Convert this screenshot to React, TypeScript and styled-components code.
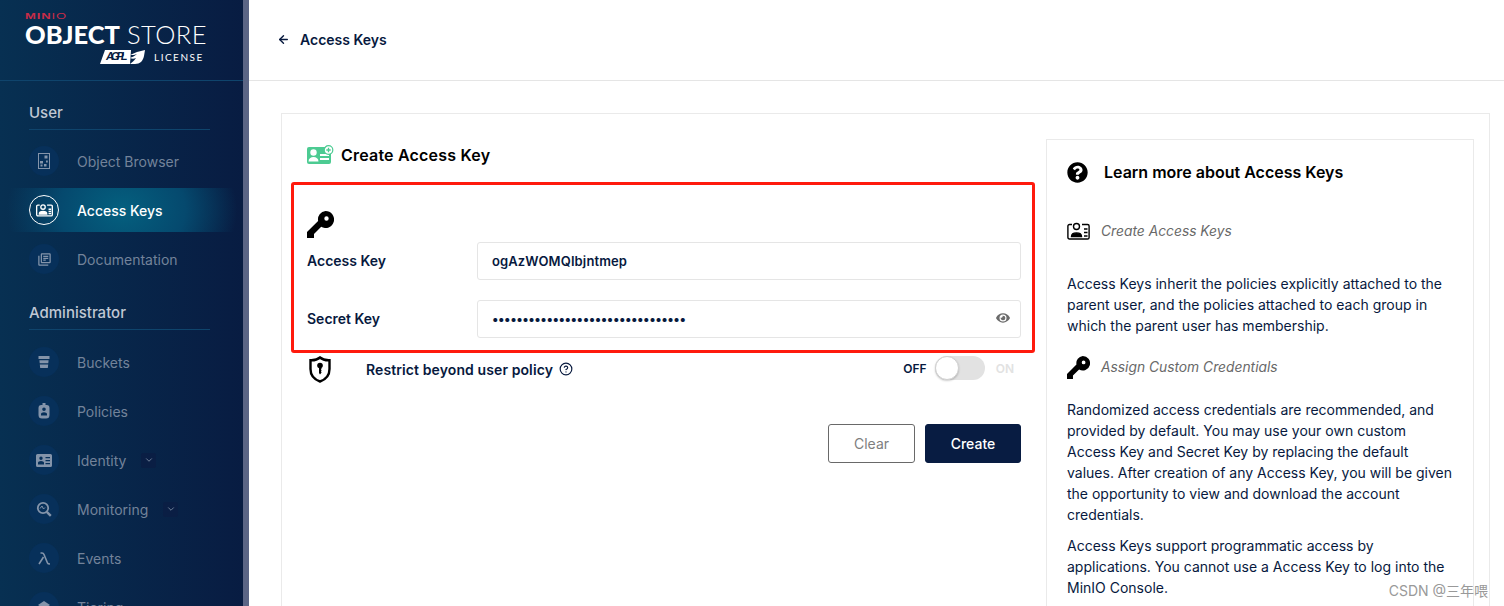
import styled, { createGlobalStyle } from 'styled-components'
import { FaQuestionCircle, FaEye } from 'react-icons/fa'
import { FiArrowLeft, FiChevronDown, FiHelpCircle } from 'react-icons/fi'
import { MdOutlineLibraryBooks } from 'react-icons/md'

const GlobalStyle = createGlobalStyle`
  html, body {
    margin: 0;
    padding: 0;
    height: 100%;
    overflow: hidden;
    background: #fff;
    font-family: Inter, "Liberation Sans", sans-serif;
  }
  * { box-sizing: border-box; }
`

const Page = styled.div`
  display: flex;
  width: 1504px;
  height: 606px;
  overflow: hidden;
  position: relative;
`

const Sidebar = styled.aside`
  width: 249px;
  height: 606px;
  flex-shrink: 0;
  overflow: hidden;
  background: linear-gradient(90deg, #073052 0%, #081c42 100%);
  border-right: 6px solid #5b6585;
`

const LogoBar = styled.div`
  height: 81px;
  border-bottom: 1px solid #0f446c;
  padding: 12px 0 0 25px;
`

const LogoMin = styled.div`
  font-family: "Liberation Sans", sans-serif;
  font-size: 9px;
  line-height: 9px;
  font-weight: 700;
  letter-spacing: 0.6px;
  color: #c72c48;
  transform: scaleX(1.45);
  transform-origin: left center;
  span { font-weight: 400; }
`

const LogoTitle = styled.div`
  font-family: Lato, sans-serif;
  font-size: 25.5px;
  line-height: 26px;
  font-weight: 900;
  color: #fff;
  white-space: nowrap;
  span { font-weight: 300; margin-left: 7px; letter-spacing: 0.4px; }
`

const LogoLicense = styled.div`
  display: flex;
  align-items: center;
  gap: 8px;
  margin: 2px 0 0 75px;
  font-family: Lato, sans-serif;
  font-size: 10px;
  letter-spacing: 1.5px;
  color: #fff;
  height: 16px;
`

const Section = styled.div<{ $top: number }>`
  margin: 0 33px 0 29px;
  padding-top: ${(p) => p.$top}px;
`

const SectionTitle = styled.div`
  height: 30px;
  font-size: 15px;
  line-height: 25px;
  font-weight: 500;
  color: #c0c8d4;
  border-bottom: 1px solid #0f446c;
`

const NavList = styled.div<{ $top: number }>`
  padding-top: ${(p) => p.$top}px;
`

const NavItem = styled.div<{ $active?: boolean }>`
  display: flex;
  align-items: center;
  height: 44px;
  margin-bottom: 5px;
  padding-left: 29px;
  font-size: 14px;
  color: ${(p) => (p.$active ? '#fff' : '#73839a')};
  font-weight: ${(p) => (p.$active ? 500 : 400)};
  background: ${(p) =>
    p.$active
      ? 'radial-gradient(ellipse 115px 90px at 122px 50%, #04607f 0%, #05496e 55%, rgba(5, 50, 85, 0) 100%)'
      : 'none'};
`

const NavCircle = styled.span<{ $active?: boolean }>`
  width: 30px;
  height: 30px;
  border-radius: 50%;
  flex-shrink: 0;
  display: flex;
  align-items: center;
  justify-content: center;
  margin-right: 18px;
  color: ${(p) => (p.$active ? '#fff' : '#8494aa')};
  background: ${(p) => (p.$active ? 'transparent' : '#07305a')};
  border: ${(p) => (p.$active ? '1px solid #fff' : 'none')};
`

const Chevron = styled.span`
  width: 15px;
  height: 15px;
  margin-left: 15px;
  border-radius: 2px;
  background: #0a1e44;
  display: flex;
  align-items: center;
  justify-content: center;
  color: #8494aa;
`

const Main = styled.main`
  flex: 1;
  min-width: 0;
  height: 606px;
  overflow: hidden;
`

const TopBar = styled.header`
  height: 81px;
  border-bottom: 1px solid #e5e5e5;
  display: flex;
  align-items: center;
  padding: 0 0 1px 28px;
  gap: 10px;
  font-size: 14px;
  font-weight: 600;
  color: #07193e;
`

const Card = styled.section`
  display: flex;
  margin: 32px 14px 0 32px;
  height: 560px;
  border: 1px solid #eaeaea;
  padding: 25px 13px 0 24px;
  gap: 25px;
`

const FormColumn = styled.div`
  width: 715px;
  flex-shrink: 0;
  padding-left: 1px;
`

const FormTitle = styled.h1`
  display: flex;
  align-items: center;
  gap: 7px;
  margin: 0;
  height: 32px;
  font-size: 16px;
  letter-spacing: 0.2px;
  font-weight: 600;
  color: #000;
`

const KeyRow = styled.div`
  height: 27px;
  margin-top: 40px;
  margin-bottom: -16px;
`

const Field = styled.div`
  display: flex;
  align-items: center;
  height: 38px;
  margin-top: 20px;
`

const FieldLabel = styled.label`
  width: 170px;
  padding-bottom: 2px;
  font-size: 14px;
  font-weight: 600;
  color: #07193e;
`

const FieldInput = styled.div`
  flex: 1;
  height: 38px;
  border: 1px solid #e5e5e5;
  border-radius: 3px;
  display: flex;
  align-items: center;
  justify-content: space-between;
  padding: 0 10px 0 14px;
  font-size: 13px;
  font-weight: 600;
  letter-spacing: 0.12px;
  color: #07193e;
  white-space: nowrap;
`

const SecretDots = styled.span`
  letter-spacing: -0.5px;
`

const EyeIcon = styled(FaEye)`
  color: #6b6b6b;
  margin-bottom: 2px;
`

const RestrictRow = styled.div`
  display: flex;
  align-items: center;
  height: 36px;
  margin-top: 13px;
  padding-left: 1px;
`

const RestrictLabel = styled.span`
  display: flex;
  align-items: center;
  gap: 6px;
  margin-left: 34px;
  font-size: 14px;
  letter-spacing: 0.1px;
  font-weight: 600;
  color: #07193e;
`

const SwitchGroup = styled.div`
  margin-left: auto;
  margin-right: 7px;
  display: flex;
  align-items: center;
  gap: 8px;
  font-size: 12px;
  font-weight: 600;
  margin-top: -2px;
`

const SwitchTrack = styled.span`
  display: block;
  position: relative;
  width: 50px;
  height: 24px;
  border-radius: 12px;
  background: #e2e2e2;
`

const SwitchKnob = styled.span`
  position: absolute;
  left: 0;
  top: 0;
  width: 24px;
  height: 24px;
  border-radius: 50%;
  background: #fff;
  border: 1px solid #d0d0d0;
  box-shadow: 0 1px 2px rgba(0, 0, 0, 0.2);
`

const OnLabel = styled.span`
  color: #e2e2e2;
  margin-left: 3px;
`

const OffLabel = styled.span`
  color: #07193e;
`

const Actions = styled.div`
  display: flex;
  justify-content: flex-end;
  gap: 10px;
  margin-top: 37px;
`

const Button = styled.button<{ $primary?: boolean }>`
  height: 39px;
  padding: 0;
  width: ${(p) => (p.$primary ? 96 : 87)}px;
  border-radius: 3px;
  font-family: inherit;
  font-size: 14px;
  border: 1px solid ${(p) => (p.$primary ? '#081c42' : '#696969')};
  background: ${(p) => (p.$primary ? '#081c42' : '#fff')};
  color: ${(p) => (p.$primary ? '#fff' : '#7e7e7e')};
  font-weight: ${(p) => (p.$primary ? 500 : 400)};
`

const HelpBox = styled.aside`
  width: 428px;
  flex-shrink: 0;
  border: 1px solid #eaeaea;
  padding: 20px 20px 0 20px;
  height: 540px;
  font-size: 14px;
  line-height: 21px;
  color: #07193e;
`

const HelpTitle = styled.h2`
  display: flex;
  align-items: center;
  gap: 16px;
  margin: 0 0 35px;
  font-size: 16px;
  line-height: 24px;
  font-weight: 600;
  color: #000;
`

const HelpSub = styled.div<{ $top?: number }>`
  display: flex;
  align-items: center;
  gap: 11px;
  height: 24px;
  margin-top: ${(p) => p.$top ?? 0}px;
  font-size: 13.8px;
  font-style: italic;
  color: #696969;
`

const HelpText = styled.p<{ $top: number }>`
  margin: ${(p) => p.$top}px 0 0;
  color: #07193e;
`

const RedFrame = styled.div`
  position: absolute;
  left: 291px;
  top: 182px;
  width: 744px;
  height: 171px;
  border: 3px solid #ff1a0d;
  border-radius: 3px;
  pointer-events: none;
`

const Watermark = styled.div`
  position: absolute;
  right: 16px;
  bottom: 6px;
  font-size: 14px;
  color: #999;
  font-family: Inter, "Noto Sans CJK SC", sans-serif;
`

const KeyIcon = ({ size }: { size: number }) => (
  <svg width={size} height={size} viewBox="0 0 27 27" fill="#000">
    <path
      fillRule="evenodd"
      d="M18.5 0a8.5 8.5 0 1 1-4.3 15.8L7 23v4H0v-6l11.1-11.1A8.5 8.5 0 0 1 18.5 0zm1 5.300a2.200 2.200 0 1 0 0 4.400 2.200 2.200 0 0 0 0-4.400z"
    />
  </svg>
)

const ObjectIcon = () => (
  <svg width="14" height="16" viewBox="0 0 14 16" fill="currentColor">
    <path fillRule="evenodd" d="M1 0h12v16H1zM2 1v14h10V1z" />
    <rect x="7.500" y="2.500" width="3" height="3" />
    <rect x="3" y="8" width="3" height="2.500" />
    <rect x="7" y="11" width="2.500" height="2.500" />
    <rect x="9" y="7.500" width="1.800" height="2" />
    <rect x="3.500" y="11.500" width="2" height="2" />
  </svg>
)

const BucketIcon = () => (
  <svg width="14" height="14" viewBox="0 0 14 14" fill="currentColor">
    <path d="M1.500 1h11v3h-11zM2.400 5.200h9.200l-.3 3H2.700zM2.800 9.400h8.400l-.4 3.600H3.200z" />
  </svg>
)

const PolicyIcon = () => (
  <svg width="12" height="16" viewBox="0 0 12 16" fill="currentColor">
    <path
      fillRule="evenodd"
      d="M4.500 0h3v2h1.200A3 3 0 0 1 11.500 5v7a3.500 3.500 0 0 1-3.500 3.500H4A3.500 3.500 0 0 1 .5 12V5a3 3 0 0 1 2.800-3h1.200zM6 4.500a1.800 1.800 0 1 0 0 3.600 1.800 1.800 0 0 0 0-3.600zM3 12.500h6V11c0-1-1.500-1.800-3-1.800S3 10 3 11z"
    />
  </svg>
)

const IdentityIcon = () => (
  <svg width="16" height="13" viewBox="0 0 16 13" fill="currentColor">
    <path
      fillRule="evenodd"
      d="M1.500 0h13A1.500 1.500 0 0 1 16 1.500v10a1.500 1.500 0 0 1-1.500 1.500h-13A1.500 1.500 0 0 1 0 11.500v-10A1.500 1.500 0 0 1 1.500 0zM5 2.500a1.700 1.700 0 1 0 0 3.400 1.700 1.700 0 0 0 0-3.400zM2 10.500h6V8.800C8 7.800 6.500 7 5 7S2 7.800 2 8.800zM9.500 3v1.300H14V3zm0 3v1.300H14V6zm0 3v1.300H14V9z"
    />
  </svg>
)

const AccessIcon = () => (
  <svg width="17" height="14" viewBox="0 0 23 18" fill="none" stroke="#fff" strokeWidth="1.800">
    <path d="M5 2.500H2.500a1.600 1.600 0 0 0-1.600 1.600v11.200A1.600 1.600 0 0 0 2.500 17h18a1.600 1.600 0 0 0 1.600-1.600V4.100a1.600 1.600 0 0 0-1.600-1.600H15" />
    <circle cx="9.500" cy="5" r="3" />
    <path d="M4.500 14.500c0-2.700 2-3.600 5-3.600s5 .9 5 3.600z" fill="#fff" />
    <path d="M17 8h3.500M17 11h3.500M17 14h3.500" />
  </svg>
)

const MonitorIcon = () => (
  <svg width="16" height="16" viewBox="0 0 16 16" fill="none" stroke="currentColor" strokeWidth="1.800">
    <circle cx="7" cy="7" r="5.200" />
    <path d="m10.800 10.800 4 4" strokeWidth="2.400" />
    <path d="M4 7.500 6 5l1.500 3L9 6.500" strokeWidth="1" />
  </svg>
)

const LambdaIcon = () => (
  <svg width="15" height="15" viewBox="0 0 15 15" fill="none" stroke="currentColor" strokeWidth="1.600">
    <path d="M2 13 6.500 6M3.500 2h1.500c1 0 1.600.5 2 1.500L10.500 12c.3.8.8 1 2.500 1" />
  </svg>
)

const TieringIcon = () => (
  <svg width="14" height="14" viewBox="0 0 14 14" fill="currentColor">
    <path d="M7 1 13 5 7 9 1 5z" />
  </svg>
)

const CreateKeyIcon = () => (
  <svg width="27" height="20" viewBox="0 0 27 20">
    <rect x="0" y="2" width="24" height="17" rx="2" fill="#4ccb92" />
    <circle cx="6.500" cy="7.500" r="3.200" fill="#fff" />
    <path d="M1.500 16.500c0-3 2.200-4.500 5-4.500s5 1.500 5 4.500z" fill="#fff" />
    <rect x="13" y="9" width="9" height="2" fill="#fff" />
    <rect x="13" y="13" width="9" height="2" fill="#fff" />
    <circle cx="21.500" cy="5" r="4.300" fill="#fff" stroke="#4ccb92" strokeWidth="1.200" />
    <path d="M19.300 5h4.400M21.500 2.800v4.400" stroke="#4ccb92" strokeWidth="1.300" />
  </svg>
)

const ShieldIcon = () => (
  <svg width="24" height="27" viewBox="0 0 24 27">
    <path
      d="M12 1.500c2 1.800 5 2.800 8.500 2.800h1V13c0 6-3.800 10.500-9.500 12.500C6.300 23.500 2.500 19 2.500 13V4.300h1c3.500 0 6.500-1 8.500-2.800z"
      fill="#fff"
      stroke="#000"
      strokeWidth="2.400"
    />
    <circle cx="12" cy="9.500" r="2.800" fill="#000" />
    <path d="M11 11h2l.6 1.500-.6 1 .6 1-.6 1 .6 1-1.600 2-1-1.500z" fill="#000" />
  </svg>
)

const CredentialIcon = () => (
  <svg width="23" height="18" viewBox="0 0 23 18" fill="none" stroke="#000" strokeWidth="1.400">
    <path d="M5 2.500H2.500a1.600 1.600 0 0 0-1.600 1.600v11.200A1.600 1.600 0 0 0 2.500 17h18a1.600 1.600 0 0 0 1.600-1.600V4.100a1.600 1.600 0 0 0-1.600-1.600H15" />
    <circle cx="9.500" cy="4.500" r="3" />
    <path d="M4.500 14.500c0-2.700 2-3.600 5-3.600s5 .9 5 3.600z" fill="#000" />
    <path d="M17 7h3.500M17 10.500h3.500M17 14h3.500" />
  </svg>
)

const AgplBadge = () => (
  <svg width="46" height="16" viewBox="0 0 46 16">
    <path d="M5 1h26l-1 14H0z" fill="#fff" />
    <text x="6" y="11" fontFamily="Liberation Sans, sans-serif" fontSize="11" fontWeight="700" fontStyle="italic" fill="#081c42" textLength="23">
      AGPL
    </text>
    <path d="M30 15h5c5 0 8-3 9-8l1-6-8 2-7 3c3 0 5 0 7-1-2 2-5 3-7 4 2 1 4 1 6 0-2 3-4 4-6 6z" fill="#fff" />
  </svg>
)

export default function App() {
  return (
    <Page>
      <GlobalStyle />
      <Sidebar>
        <LogoBar>
          <LogoMin>MIN<span>IO</span></LogoMin>
          <LogoTitle>OBJECT<span>STORE</span></LogoTitle>
          <LogoLicense>
            <AgplBadge />
            LICENSE
          </LogoLicense>
        </LogoBar>
        <Section $top={19}>
          <SectionTitle>User</SectionTitle>
        </Section>
        <NavList $top={9}>
          <NavItem><NavCircle><ObjectIcon /></NavCircle>Object Browser</NavItem>
          <NavItem $active><NavCircle $active><AccessIcon /></NavCircle>Access Keys</NavItem>
          <NavItem><NavCircle><MdOutlineLibraryBooks size={15} /></NavCircle>Documentation</NavItem>
        </NavList>
        <Section $top={14}>
          <SectionTitle>Administrator</SectionTitle>
        </Section>
        <NavList $top={10}>
          <NavItem><NavCircle><BucketIcon /></NavCircle>Buckets</NavItem>
          <NavItem><NavCircle><PolicyIcon /></NavCircle>Policies</NavItem>
          <NavItem>
            <NavCircle><IdentityIcon /></NavCircle>Identity
            <Chevron><FiChevronDown size={10} /></Chevron>
          </NavItem>
          <NavItem>
            <NavCircle><MonitorIcon /></NavCircle>Monitoring
            <Chevron><FiChevronDown size={10} /></Chevron>
          </NavItem>
          <NavItem><NavCircle><LambdaIcon /></NavCircle>Events</NavItem>
          <NavItem><NavCircle><TieringIcon /></NavCircle>Tiering</NavItem>
        </NavList>
      </Sidebar>
      <Main>
        <TopBar>
          <FiArrowLeft size={13} strokeWidth={2.6} />
          Access Keys
        </TopBar>
        <Card>
          <FormColumn>
            <FormTitle><CreateKeyIcon />Create Access Key</FormTitle>
            <KeyRow><KeyIcon size={27} /></KeyRow>
            <Field>
              <FieldLabel>Access Key</FieldLabel>
              <FieldInput>ogAzWOMQIbjntmep</FieldInput>
            </Field>
            <Field>
              <FieldLabel>Secret Key</FieldLabel>
              <FieldInput>
                <SecretDots>••••••••••••••••••••••••••••••••</SecretDots>
                <EyeIcon size={14} />
              </FieldInput>
            </Field>
            <RestrictRow>
              <ShieldIcon />
              <RestrictLabel>
                Restrict beyond user policy
                <FiHelpCircle size={14} />
              </RestrictLabel>
              <SwitchGroup>
                <OffLabel>OFF</OffLabel>
                <SwitchTrack><SwitchKnob /></SwitchTrack>
                <OnLabel>ON</OnLabel>
              </SwitchGroup>
            </RestrictRow>
            <Actions>
              <Button>Clear</Button>
              <Button $primary>Create</Button>
            </Actions>
          </FormColumn>
          <HelpBox>
            <HelpTitle><FaQuestionCircle size={21} />Learn more about Access Keys</HelpTitle>
            <HelpSub><CredentialIcon />Create Access Keys</HelpSub>
            <HelpText $top={30}>
              Access Keys inherit the policies explicitly attached to the parent user, and the
              policies attached to each group in which the parent user has membership.
            </HelpText>
            <HelpSub $top={19}><KeyIcon size={23} />Assign Custom Credentials</HelpSub>
            <HelpText $top={20}>
              Randomized access credentials are recommended, and provided by default. You may use
              your own custom Access Key and Secret Key by replacing the default values. After
              creation of any Access Key, you will be given the opportunity to view and download
              the account credentials.
            </HelpText>
            <HelpText $top={10}>
              Access Keys support programmatic access by applications. You cannot use a Access Key
              to log into the MinIO Console.
            </HelpText>
          </HelpBox>
        </Card>
      </Main>
      <RedFrame />
      <Watermark>CSDN @三年喂</Watermark>
    </Page>
  )
}
